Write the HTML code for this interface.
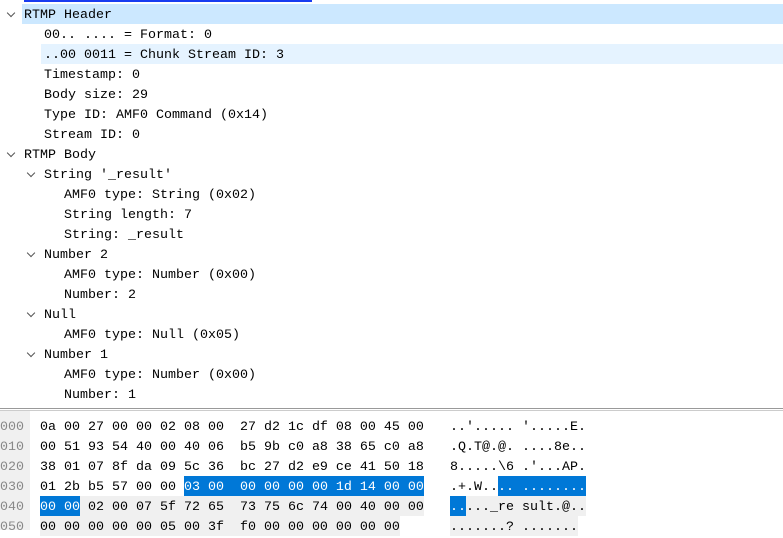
<!DOCTYPE html><html><head><style>
body{margin:0;width:783px;height:530px;overflow:hidden;background:#fff;font-family:"Liberation Mono",monospace;font-size:13.33px;color:#000;position:relative}
.r{position:absolute;left:0;right:0;height:20px;line-height:20px;white-space:pre}
.t{position:absolute;top:2px;white-space:pre}
.c{position:absolute;top:7px;width:5px;height:5px;border-right:1.3px solid #555;border-bottom:1.3px solid #555;transform:rotate(45deg)}
.h{position:absolute;line-height:20px;height:20px;white-space:pre}
</style></head><body>
<div style="position:absolute;left:24px;top:0;width:288px;height:2px;background:#1a3cf0"></div>
<div class="r" style="top:4px"><div style="position:absolute;left:22px;right:0;top:0;bottom:0;background:#cce8ff"></div><div class="c" style="left:8px;top:6px"></div><span class="t" style="left:24px">RTMP Header</span></div>
<div class="r" style="top:24px"><span class="t" style="left:44px">00.. .... = Format: 0</span></div>
<div class="r" style="top:44px"><div style="position:absolute;left:41px;right:0;top:0;bottom:0;background:#e5f3ff"></div><span class="t" style="left:44px">..00 0011 = Chunk Stream ID: 3</span></div>
<div class="r" style="top:64px"><span class="t" style="left:44px">Timestamp: 0</span></div>
<div class="r" style="top:84px"><span class="t" style="left:44px">Body size: 29</span></div>
<div class="r" style="top:104px"><span class="t" style="left:44px">Type ID: AMF0 Command (0x14)</span></div>
<div class="r" style="top:124px"><span class="t" style="left:44px">Stream ID: 0</span></div>
<div class="r" style="top:144px"><div class="c" style="left:8px;top:6px"></div><span class="t" style="left:24px">RTMP Body</span></div>
<div class="r" style="top:164px"><div class="c" style="left:28px;top:6px"></div><span class="t" style="left:44px">String '_result'</span></div>
<div class="r" style="top:184px"><span class="t" style="left:64px">AMF0 type: String (0x02)</span></div>
<div class="r" style="top:204px"><span class="t" style="left:64px">String length: 7</span></div>
<div class="r" style="top:224px"><span class="t" style="left:64px">String: _result</span></div>
<div class="r" style="top:244px"><div class="c" style="left:28px;top:6px"></div><span class="t" style="left:44px">Number 2</span></div>
<div class="r" style="top:264px"><span class="t" style="left:64px">AMF0 type: Number (0x00)</span></div>
<div class="r" style="top:284px"><span class="t" style="left:64px">Number: 2</span></div>
<div class="r" style="top:304px"><div class="c" style="left:28px;top:6px"></div><span class="t" style="left:44px">Null</span></div>
<div class="r" style="top:324px"><span class="t" style="left:64px">AMF0 type: Null (0x05)</span></div>
<div class="r" style="top:344px"><div class="c" style="left:28px;top:6px"></div><span class="t" style="left:44px">Number 1</span></div>
<div class="r" style="top:364px"><span class="t" style="left:64px">AMF0 type: Number (0x00)</span></div>
<div class="r" style="top:384px"><span class="t" style="left:64px">Number: 1</span></div>
<div style="position:absolute;left:0;right:0;top:408px;height:1px;background:#999"></div>
<div style="position:absolute;left:0;right:0;top:410px;height:1px;background:#ccc"></div>
<div style="position:absolute;left:0;top:411px;width:30px;bottom:0;background:#f0f0f0"></div>
<div style="position:absolute;left:80px;top:496px;width:344px;height:20px;background:#f0f0f0"></div>
<div style="position:absolute;left:40px;top:516px;width:360px;height:20px;background:#f0f0f0"></div>
<div style="position:absolute;left:466px;top:496px;width:120px;height:20px;background:#f0f0f0"></div>
<div style="position:absolute;left:450px;top:516px;width:128px;height:20px;background:#f0f0f0"></div>
<div style="position:absolute;left:184px;top:476px;width:240px;height:20px;background:#0078d7"></div>
<div style="position:absolute;left:40px;top:496px;width:40px;height:20px;background:#0078d7"></div>
<div style="position:absolute;left:498px;top:476px;width:88px;height:20px;background:#0078d7"></div>
<div style="position:absolute;left:450px;top:496px;width:16px;height:20px;background:#0078d7"></div>
<div class="h" style="left:-8px;top:418px;color:#888">0000
0010
0020
0030
0040
0050</div>
<div class="h" style="left:40px;top:418px">0a 00 27 00 00 02 08 00  27 d2 1c df 08 00 45 00
00 51 93 54 40 00 40 06  b5 9b c0 a8 38 65 c0 a8
38 01 07 8f da 09 5c 36  bc 27 d2 e9 ce 41 50 18
01 2b b5 57 00 00 <span style="color:#fff">03 00  00 00 00 00 1d 14 00 00</span>
<span style="color:#fff">00 00</span> 02 00 07 5f 72 65  73 75 6c 74 00 40 00 00
00 00 00 00 00 05 00 3f  f0 00 00 00 00 00 00</div>
<div class="h" style="left:450px;top:418px">..'..... '.....E.
.Q.T@.@. ....8e..
8.....\6 .'...AP.
.+.W..<span style="color:#fff">.. ........</span>
<span style="color:#fff">..</span>..._re sult.@..
.......? .......</div>
</body></html>
